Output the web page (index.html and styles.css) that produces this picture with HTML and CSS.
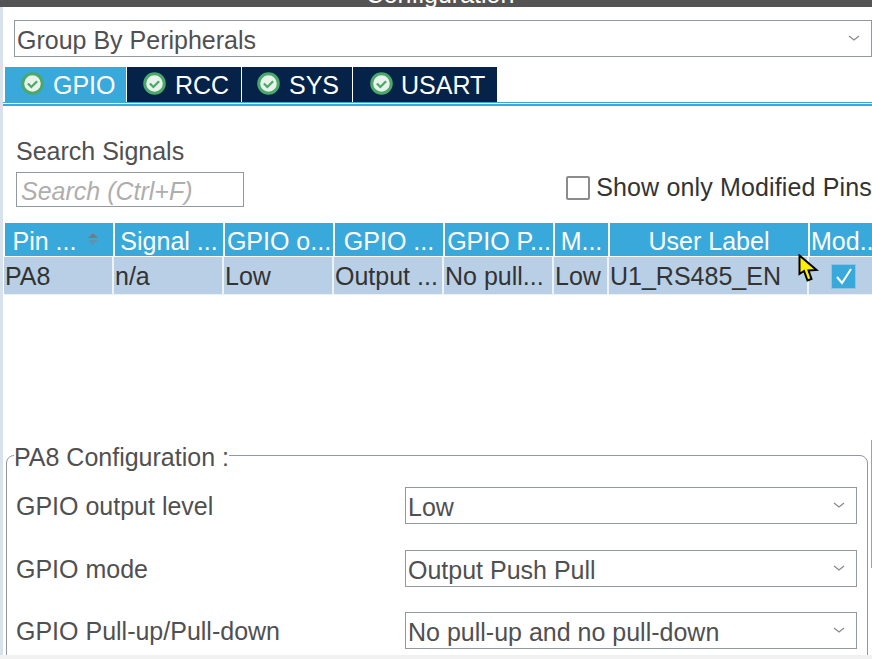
FILE: index.html
```html
<!DOCTYPE html>
<html lang="en">
<head>
<meta charset="utf-8">
<title>Configuration</title>
<link rel="stylesheet" href="styles.css">
</head>
<body>
<div class="topbar"><span class="topbar-title">Configuration</span></div>
<main class="panel">
  <div class="select group-select"><span>Group By Peripherals</span><svg class="chev" viewBox="0 0 12 7"><path d="M1 1l5 4 5-4"/></svg></div>
  <nav class="tabs">
    <div class="tab active tab-gpio"><svg class="ok" viewBox="0 0 20 20"><circle cx="10" cy="10" r="8.5"/><path d="M6 10l3 3 5-5"/></svg><span>GPIO</span></div>
    <div class="tab tab-rcc"><svg class="ok" viewBox="0 0 20 20"><circle cx="10" cy="10" r="8.5"/><path d="M6 10l3 3 5-5"/></svg><span>RCC</span></div>
    <div class="tab tab-sys"><svg class="ok" viewBox="0 0 20 20"><circle cx="10" cy="10" r="8.5"/><path d="M6 10l3 3 5-5"/></svg><span>SYS</span></div>
    <div class="tab tab-usart"><svg class="ok" viewBox="0 0 20 20"><circle cx="10" cy="10" r="8.5"/><path d="M6 10l3 3 5-5"/></svg><span>USART</span></div>
  </nav>
  <div class="tabline"></div>
  <section class="search-area">
    <div class="search-left">
      <div class="search-label">Search Signals</div>
      <div class="search-input">Search (Ctrl+F)</div>
    </div>
    <label class="modified"><span class="checkbox"></span><span>Show only Modified Pins</span></label>
  </section>
  <div class="grid head">
    <div class="cell sorted"><span>Pin ...</span><svg class="sort" viewBox="0 0 12 14"><path class="up" d="M6 1l5 5H1z"/><path class="down" d="M1 8h10l-5 5z"/></svg></div>
    <div class="cell">Signal ...</div>
    <div class="cell">GPIO o...</div>
    <div class="cell">GPIO ...</div>
    <div class="cell">GPIO P...</div>
    <div class="cell">M...</div>
    <div class="cell">User Label</div>
    <div class="cell left">Mod...</div>
  </div>
  <div class="grid row">
    <div class="cell">PA8</div>
    <div class="cell">n/a</div>
    <div class="cell">Low</div>
    <div class="cell">Output ...</div>
    <div class="cell">No pull...</div>
    <div class="cell">Low</div>
    <div class="cell">U1_RS485_EN</div>
    <div class="cell check-cell"><svg class="tick" viewBox="0 0 25 25"><rect x="0.5" y="0.5" width="24" height="24"/><path d="M6 13l5 6 9-14"/></svg></div>
  </div>
  <fieldset class="config">
    <legend>PA8 Configuration :</legend>
    <div class="field"><span class="field-label">GPIO output level</span><div class="select"><span>Low</span><svg class="chev" viewBox="0 0 12 7"><path d="M1 1l5 4 5-4"/></svg></div></div>
    <div class="field"><span class="field-label">GPIO mode</span><div class="select"><span>Output Push Pull</span><svg class="chev" viewBox="0 0 12 7"><path d="M1 1l5 4 5-4"/></svg></div></div>
    <div class="field"><span class="field-label">GPIO Pull-up/Pull-down</span><div class="select"><span>No pull-up and no pull-down</span><svg class="chev" viewBox="0 0 12 7"><path d="M1 1l5 4 5-4"/></svg></div></div>
  </fieldset>
</main>
<div class="bottom-strip"></div>
<div class="scroll-thumb"></div>
<svg class="cursor" viewBox="0 0 21 29"><path d="M1.500 1.500V20l4.500-3 3.500 9.500 4-1.500-3-8.500 8-.5z"/></svg>
</body>
</html>
```
FILE: styles.css
```css
* { box-sizing: border-box; }
html, body { margin: 0; height: 659px; overflow: hidden; background: #fff; }
body {
  position: relative;
  font-family: "Liberation Sans", Arial, sans-serif;
  font-size: 25px;
  color: #505050;
  display: flex;
  flex-direction: column;
}
.topbar {
  height: 7px;
  flex: none;
  background: #545454;
  overflow: hidden;
  text-align: center;
  padding-left: 8px;
}
.topbar-title {
  display: block;
  color: #fff;
  line-height: 24px;
  margin-top: -18px;
}
.panel {
  flex: 1;
  min-height: 0;
  overflow: hidden;
  border-left: 3px solid #d7e2ec;
  padding-top: 13px;
}
.select {
  display: flex;
  align-items: center;
  justify-content: space-between;
  border: 1px solid #93989c;
  height: 37px;
  padding: 0 11px 0 2px;
  background: #fff;
}
.select span { position: relative; top: 2px; }
.group-select { margin: 0 0 0 11px; padding-left: 2px; }
.chev { width: 12px; height: 7px; fill: none; stroke: #8a8a8a; stroke-width: 1.3; }
.tabs { display: flex; margin: 10px 0 0 2px; height: 35px; gap: 1px; }
.tab {
  display: flex;
  align-items: center;
  background: #052349;
  color: #fff;
  height: 35px;
  padding-left: 16px;
  padding-top: 2px;
}
.tab.active { background: #39a9dc; }
.tab-gpio { width: 121px; }
.tab-rcc { width: 114px; }
.tab-sys { width: 110px; padding-left: 15px; }
.tab-usart { width: 144px; padding-left: 17px; }
.tab-usart .ok { margin-right: 8px; }
.ok { width: 23px; height: 23px; margin-right: 9px; flex: none; margin-top: -5px; }
.ok circle { fill: #e9f3ea; stroke: #4aa86b; stroke-width: 2.6; }
.ok path { fill: none; stroke: #4aa86b; stroke-width: 2; }
.tabline {
  height: 4px;
  border-top: 1px solid #39a9dc;
  border-bottom: 2px solid #39a9dc;
  margin-left: -1px;
}
.search-area {
  display: flex;
  justify-content: space-between;
  align-items: flex-start;
  padding: 30px 0 0 13px;
  height: 117px;
}
.search-label { line-height: 30px; margin-bottom: 6px; }
.search-input {
  width: 228px;
  height: 35px;
  border: 1px solid #93989c;
  padding-left: 4px;
  line-height: 37px;
  font-style: italic;
  color: #aeaeae;
}
.modified {
  display: flex;
  align-items: center;
  gap: 6px;
  color: #333;
  margin-top: 37px;
  white-space: nowrap;
  letter-spacing: 0.15px;
}
.checkbox { width: 24px; height: 24px; border: 2px solid #8c8c8c; background: #fff; border-radius: 2px; flex: none; }
.grid {
  display: grid;
  grid-template-columns: 110px 110px 110px 110px 110px 55px 200px 1fr;
}
.head { height: 34px; margin-left: 2px; }
.head .cell {
  background: #39a9dc;
  color: #fff;
  border-right: 2px solid #fff;
  border-bottom: 1px solid #fff;
  text-align: center;
  line-height: 37px;
  white-space: nowrap;
  overflow: hidden;
  position: relative;
}
.head .cell:last-child { border-right: 0; }
.head .left { text-align: left; padding-left: 1px; }
.head .sorted { padding-right: 29px; }
.sort { position: absolute; left: 82px; top: 9px; width: 12px; height: 14px; }
.sort .up { fill: #6f7d86; }
.sort .down { fill: #5e93b3; }
.row { height: 38px; margin-left: 1px; border-bottom: 1px solid #eef0f2; }
.row .cell {
  background: #b8cfe6;
  color: #333;
  border-right: 2px solid #eef2f5;
  line-height: 39px;
  padding-left: 1px;
  white-space: nowrap;
  overflow: hidden;
}
.row .cell:last-child { border-right: 0; }
.check-cell { display: flex; align-items: center; }
.row .check-cell { padding-left: 22px; }
.tick { width: 25px; height: 25px; flex: none; margin-top: 1px; }
.tick rect { fill: #39a9dc; stroke: #8fc4e2; }
.tick path { fill: none; stroke: #fff; stroke-width: 2; }
.config {
  margin: 145px 4px 0 3px;
  padding: 0 10px 0 9px;
  border: 1px solid #93989c;
  border-radius: 8px;
  min-width: 0;
  height: 280px;
}
.config legend { padding: 4px 0 0; margin-left: -2px; line-height: 26px; }
.field { display: flex; align-items: center; justify-content: space-between; height: 37px; margin-bottom: 25.500px; position: relative; top: 17px; }
.field .select { width: 452px; height: 37px; }
.field-label { white-space: nowrap; position: relative; top: 1px; }
.bottom-strip { height: 4px; flex: none; background: #f1f1f1; }
.scroll-thumb { position: absolute; right: 0; top: 440px; width: 1px; height: 128px; background: #6fb0dc; }
.cursor { position: absolute; left: 798px; top: 254px; width: 21px; height: 29px; fill: #ffef00; stroke: #000; stroke-width: 2; }
```
